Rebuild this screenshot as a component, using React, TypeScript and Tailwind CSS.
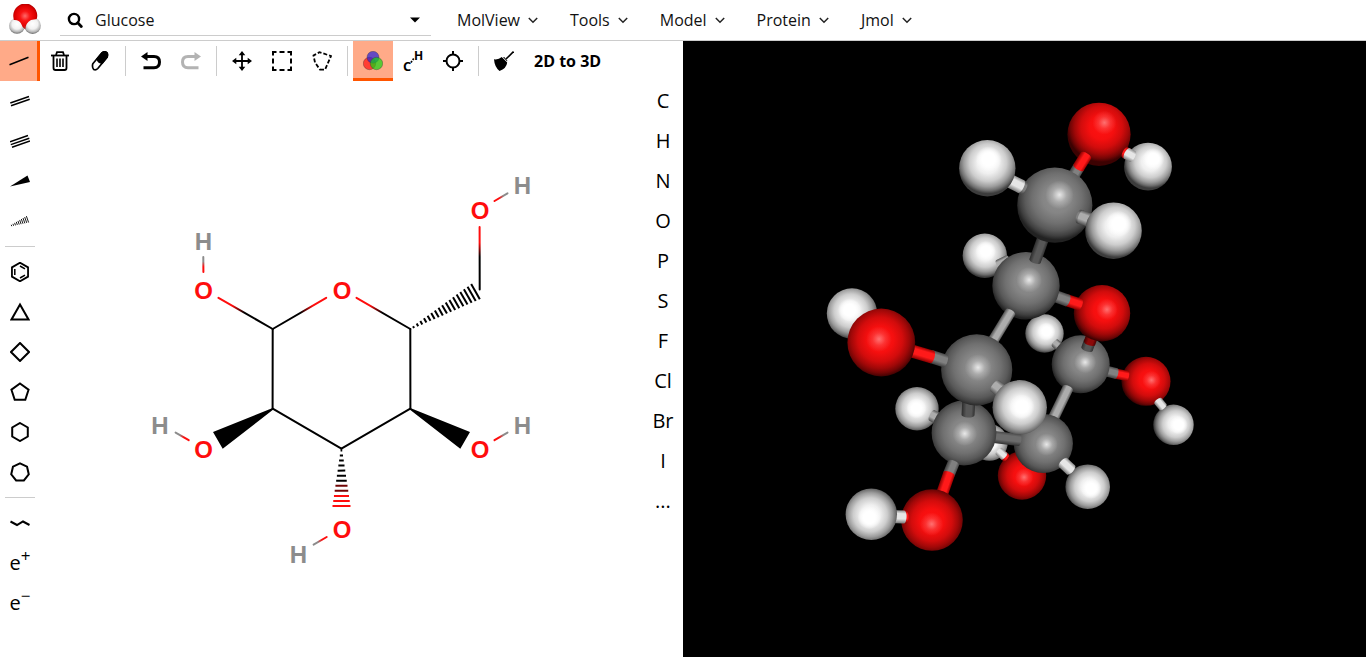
import React from "react";

type Point = [number, number];

/* ---------- Header ---------- */

function Logo() {
  return (
    <svg className="h-8 w-8" viewBox="0 0 32 32" role="img" aria-label="MolView">
      <defs>
        <radialGradient id="logo-o" gradientUnits="userSpaceOnUse" cx="16" cy="12" r="14">
          <stop offset="0" stopColor="#ff6a6a" />
          <stop offset="0.35" stopColor="#f81414" />
          <stop offset="0.75" stopColor="#dc0000" />
          <stop offset="1" stopColor="#8a0000" />
        </radialGradient>
        <radialGradient id="logo-h" cx="0.5" cy="0.4" r="0.62">
          <stop offset="0" stopColor="#ffffff" />
          <stop offset="0.5" stopColor="#f1f1f1" />
          <stop offset="0.8" stopColor="#b4b4b4" />
          <stop offset="1" stopColor="#5a5a5a" />
        </radialGradient>
      </defs>
      <circle cx="8" cy="21.800" r="7.900" fill="url(#logo-h)" />
      <path d="M4.500 14 A12 12 0 1 1 28 14 Q27 14 24 14 Q17 16 17 21 L16 25 Q13 23 12 19.500 Q10 15.500 4.800 16Z" fill="url(#logo-o)" />
      <circle cx="23.600" cy="21.600" r="8.300" fill="url(#logo-h)" />
      <path d="M14 18 L16.200 25.500 Q16.500 19 22 16 L28 15 L26 10 L14 12Z" fill="url(#logo-o)" />
    </svg>
  );
}

function Chevron() {
  return (
    <svg className="h-[10px] w-[10px]" viewBox="0 0 10 10" fill="none" stroke="#222" strokeWidth="1.5" aria-hidden="true">
      <path d="M0.800 3 L5 7.200 L9.200 3" />
    </svg>
  );
}

const menus = ["MolView", "Tools", "Model", "Protein", "Jmol"];

function Header() {
  return (
    <header className="flex h-[41px] items-start border-b border-[#ccc]">
      <a href="#home" className="flex h-10 w-[60px] shrink-0 items-center pl-[9px]">
        <Logo />
      </a>
      <form className="flex h-9 w-[371px] shrink items-center border-b border-[#ccc] pt-1" onSubmit={(e) => e.preventDefault()}>
        <button type="submit" aria-label="Search" className="flex w-[35px] shrink-0 items-center pl-[7px]">
          <svg className="h-4 w-4" viewBox="0 0 16 16" fill="none" stroke="#000" aria-hidden="true">
            <circle cx="7" cy="7" r="5.100" strokeWidth="2.400" />
            <path d="M10.700 10.700 L14.300 14.500" strokeWidth="2.800" strokeLinecap="round" />
          </svg>
        </button>
        <input aria-label="Search molecules" defaultValue="Glucose" className="h-8 min-w-0 flex-1 bg-transparent text-base text-[#111] outline-none" />
        <button type="button" aria-label="Search source" className="flex h-8 w-8 items-center justify-center">
          <svg className="h-[6px] w-[10px]" viewBox="0 0 10 6" aria-hidden="true">
            <path d="M0 0.500 H10 L5 5.500Z" />
          </svg>
        </button>
      </form>
      <nav className="ml-[10px] flex h-10">
        {menus.map((m) => (
          <button key={m} type="button" className="flex items-center gap-2 px-4 text-base text-[#111]">
            {m}
            <Chevron />
          </button>
        ))}
      </nav>
    </header>
  );
}

/* ---------- Toolbar icons (20 x 20 grid) ---------- */

function Icon({ children }: { children: React.ReactNode }) {
  return (
    <svg className="h-5 w-5" viewBox="0 0 20 20" fill="none" stroke="#000" strokeWidth="1.500" aria-hidden="true">
      {children}
    </svg>
  );
}

const trash = (
  <Icon>
    <path d="M1 4.500 H19" strokeWidth="1.800" />
    <path d="M6 4 L7 1.200 H13 L14 4" strokeWidth="1.800" />
    <path d="M3.500 5 V17 Q3.500 19 5.500 19 H14.500 Q16.500 19 16.500 17 V5" strokeWidth="1.800" />
    <path d="M7 7.500 V16 M10 7.500 V16 M13 7.500 V16" strokeWidth="1.600" />
  </Icon>
);

const eraser = (
  <Icon>
    <path d="M2.800 12.800 L12 1.800 Q13.500 0.500 15.500 0.900 L16.800 1.600 Q18 3 17.200 6 L7.800 17.500 Q5.800 19.600 3.800 18.600 Q1.800 16.500 2.800 12.800Z" strokeWidth="1.700" />
    <path d="M7 8 L12 1.800 Q13.500 0.500 15.500 0.900 L16.800 1.600 Q18 3 17.200 6 L12.200 12.300 Q8.500 12 7 8Z" fill="#000" />
  </Icon>
);

const undo = (
  <Icon>
    <path d="M5 5.500 H13 Q18.500 5.500 18.500 11 Q18.500 16.700 13 16.700 H2.500" strokeWidth="3" />
    <path d="M0 5.500 L6.500 1 V10Z" fill="#000" stroke="none" />
  </Icon>
);

const redo = (
  <Icon>
    <g stroke="#b3b3b3">
      <path d="M15 5.500 H7 Q1.500 5.500 1.500 11 Q1.500 16.700 7 16.700 H17.500" strokeWidth="3" />
      <path d="M20 5.500 L13.500 1 V10Z" fill="#b3b3b3" stroke="none" />
    </g>
  </Icon>
);

const move = (
  <Icon>
    <path d="M10 2 V18 M2 10 H18" strokeWidth="1.800" />
    <path d="M10 0 L13.300 4.300 H6.700Z M10 20 L13.300 15.700 H6.700Z M0 10 L4.300 6.700 V13.300Z M20 10 L15.700 6.700 V13.300Z" fill="#000" stroke="none" />
  </Icon>
);

const rectSelect = (
  <Icon>
    <path d="M1 4.500 V1 H4.500 M15.500 1 H19 V4.500 M19 15.500 V19 H15.500 M4.500 19 H1 V15.500" strokeWidth="2" />
    <path d="M7.500 1 H12.500 M7.500 19 H12.500 M1 7.500 V12.500 M19 7.500 V12.500" strokeWidth="2" />
  </Icon>
);

const lasso = (
  <Icon>
    <path d="M8 18.700 H13 L19 5 L7.500 1.200 L1.500 4.500 L3 11.500Z" strokeWidth="1.800" strokeDasharray="4 2" />
  </Icon>
);

const colorAtoms = (
  <Icon>
    <g stroke="#333" strokeWidth="0.500" strokeOpacity="0.700" fillOpacity="0.700">
      <circle cx="6.500" cy="12.500" r="6.200" fill="#ff1010" />
      <circle cx="10" cy="6.300" r="6" fill="#2420dc" />
      <circle cx="13.500" cy="12.500" r="6.200" fill="#12d412" />
    </g>
  </Icon>
);

const carbonHydrogen = (
  <svg className="h-9 w-9" viewBox="-8 -8 36 36" fill="none" stroke="#000" aria-hidden="true">
    <g fill="#000" stroke="none" fontFamily="Open Sans, sans-serif" fontWeight="700">
      <text x="0" y="20" fontSize="13">C</text>
      <text x="11" y="8.500" fontSize="12">H</text>
    </g>
    <path d="M8 11.500 L9 10 M9.700 9 L10.700 7.500" strokeWidth="1.600" />
  </svg>
);

const center = (
  <Icon>
    <circle cx="10" cy="10" r="6.500" strokeWidth="2" />
    <path d="M10 0 V4 M10 16 V20 M0 10 H4 M16 10 H20" strokeWidth="2" />
  </Icon>
);

const broom = (
  <Icon>
    <path d="M12 8 L19.500 0.600" strokeWidth="1.600" />
    <path d="M0 8.300 Q4.500 9 7.800 6 L13.200 11.500 Q12.500 17.500 5.500 20 Q0.500 16 0 8.300Z" fill="#000" stroke="none" />
    <path d="M8.800 6.300 L10.200 6 L13.300 9.500 L13 10.800Z" fill="#000" stroke="none" />
    <path d="M8 5.500 L13.800 11.500" stroke="#fff" strokeWidth="0.600" />
  </Icon>
);

function Divider() {
  return <hr className="mx-[5px] h-[30px] w-px border-0 bg-[#ccc]" />;
}

function ToolButton({ label, active, children }: { label: string; active?: boolean; children: React.ReactNode }) {
  return (
    <button
      type="button"
      aria-label={label}
      aria-pressed={active}
      className={
        active
          ? "flex h-10 w-10 shrink-0 items-center justify-center bg-[#ffaa88] shadow-[inset_0_-3px_0_#ff5500]"
          : "flex h-10 w-10 shrink-0 items-center justify-center"
      }
    >
      {children}
    </button>
  );
}

function TopTools() {
  return (
    <div role="toolbar" aria-label="Sketch tools" className="flex h-10 items-center">
      <ToolButton label="Clear all">{trash}</ToolButton>
      <ToolButton label="Erase">{eraser}</ToolButton>
      <Divider />
      <ToolButton label="Undo">{undo}</ToolButton>
      <ToolButton label="Redo">{redo}</ToolButton>
      <Divider />
      <ToolButton label="Drag">{move}</ToolButton>
      <ToolButton label="Rectangle selection">{rectSelect}</ToolButton>
      <ToolButton label="Lasso selection">{lasso}</ToolButton>
      <Divider />
      <ToolButton label="Color mode" active>{colorAtoms}</ToolButton>
      <ToolButton label="Skeletal display">{carbonHydrogen}</ToolButton>
      <ToolButton label="Center structure">{center}</ToolButton>
      <Divider />
      <ToolButton label="Clean structure">{broom}</ToolButton>
      <button type="button" className="h-10 px-[10px] text-base font-bold whitespace-nowrap">2D to 3D</button>
    </div>
  );
}

/* ---------- Left column ---------- */

function ring(n: number, r: number, cy: number, start = -90) {
  return Array.from({ length: n }, (_, i) => {
    const a = ((start + (i * 360) / n) * Math.PI) / 180;
    return `${(10 + r * Math.cos(a)).toFixed(2)},${(cy + r * Math.sin(a)).toFixed(2)}`;
  }).join(" ");
}

const hashLines = Array.from({ length: 10 }, (_, i) => {
  const t = i / 9;
  const x = 1.5 + 16 * t;
  const y = 14.5 - 6.2 * t;
  const h = 0.7 + 2.5 * t;
  return `M${x - h * 0.35} ${y - h} L${x + h * 0.35} ${y + h}`;
}).join(" ");

const bondTools: { label: string; icon: React.ReactNode }[] = [
  { label: "Double bond", icon: <path d="M0.300 12 L19 5.500 M1 14.800 L19.700 8.300" /> },
  { label: "Triple bond", icon: <path d="M0 10.800 L18 4.500 M0.800 13.600 L19.300 7.200 M2 16.200 L20 9.900" /> },
  { label: "Wedge bond", icon: <path d="M0 15.500 L17.500 4.500 L20 11Z" fill="#000" stroke="none" /> },
  { label: "Hash bond", icon: <path d={hashLines} strokeWidth="0.900" /> },
];

const ringTools: { label: string; icon: React.ReactNode }[] = [
  {
    label: "Benzene",
    icon: (
      <>
        <polygon points={ring(6, 9.3, 10)} strokeWidth="1.800" />
        <path d="M10 4 L15 6.900 M4.800 7 V13 M10 16 L15 13.100" strokeWidth="1.500" />
      </>
    ),
  },
  { label: "Cyclopropane", icon: <polygon points="10,2.500 18.500,17.500 1.500,17.500" strokeWidth="2" /> },
  { label: "Cyclobutane", icon: <polygon points={ring(4, 9, 10)} strokeWidth="2" /> },
  { label: "Cyclopentane", icon: <polygon points={ring(5, 9, 10.5)} strokeWidth="2" /> },
  { label: "Cyclohexane", icon: <polygon points={ring(6, 9, 10)} strokeWidth="2" /> },
  { label: "Cycloheptane", icon: <polygon points={ring(7, 9, 10.3)} strokeWidth="2" /> },
];

function LeftTools() {
  return (
    <div role="toolbar" aria-label="Bonds and rings" className="flex w-10 shrink-0 flex-col items-center">
      <button type="button" aria-label="Single bond" aria-pressed="true" className="flex h-10 w-10 items-center justify-center bg-[#ffaa88] pr-[3px] shadow-[inset_-3px_0_0_#ff5500]">
        <Icon><path d="M0.500 13.700 L19.500 6.300" /></Icon>
      </button>
      {bondTools.map((t) => (
        <ToolButton key={t.label} label={t.label}><Icon>{t.icon}</Icon></ToolButton>
      ))}
      <hr className="my-[5px] h-px w-[30px] border-0 bg-[#ccc]" />
      {ringTools.map((t) => (
        <ToolButton key={t.label} label={t.label}><Icon>{t.icon}</Icon></ToolButton>
      ))}
      <hr className="my-[5px] h-px w-[30px] border-0 bg-[#ccc]" />
      <ToolButton label="Carbon chain">
        <Icon><path d="M0.500 8.500 L7 12 L13 8.500 L19.500 12" strokeWidth="2" /></Icon>
      </ToolButton>
      <button type="button" aria-label="Positive charge" className="h-10 w-10 text-xl leading-10">
        e<sup className="text-[17px] leading-none">+</sup>
      </button>
      <button type="button" aria-label="Negative charge" className="h-10 w-10 text-xl leading-10">
        e<sup className="text-[17px] leading-none">−</sup>
      </button>
    </div>
  );
}

/* ---------- Structural formula ---------- */

const RED = "#ff0d0d";
const GRAY = "#8c8c8c";

const bonds2d: { a: Point; b: Point; from: string; to: string }[] = [
  { a: [218.5, 297.8], b: [272.7, 329], from: RED, to: "#000" },
  { a: [326.2, 297.8], b: [272.7, 329], from: RED, to: "#000" },
  { a: [356.5, 297.8], b: [410.3, 329], from: RED, to: "#000" },
  { a: [479.6, 227], b: [479.7, 289.5], from: RED, to: "#000" },
  { a: [272.7, 329], b: [272.6, 408.7], from: "#000", to: "#000" },
  { a: [410.3, 329], b: [410.4, 408.7], from: "#000", to: "#000" },
  { a: [272.7, 408.7], b: [341.4, 448.7], from: "#000", to: "#000" },
  { a: [341.4, 448.7], b: [410.3, 408.7], from: "#000", to: "#000" },
  { a: [203.4, 272], b: [203.3, 257], from: RED, to: GRAY },
  { a: [494.5, 201], b: [507.5, 193.3], from: RED, to: GRAY },
  { a: [494.5, 440.2], b: [507.5, 432.6], from: RED, to: GRAY },
  { a: [188.7, 440.2], b: [175.6, 432.6], from: RED, to: GRAY },
  { a: [326.7, 537], b: [313.6, 544.6], from: RED, to: GRAY },
];

const oxygens2d: Point[] = [[203.7, 290], [342, 290], [480, 210], [203.7, 449], [480, 449], [342, 529]];
const hydrogens2d: Point[] = [[203.3, 241], [522.3, 185], [160, 425], [522.3, 425], [298.3, 554]];

function hashBond(a: Point, b: Point, n: number, maxHalf: number, start: number) {
  const dx = b[0] - a[0];
  const dy = b[1] - a[1];
  const len = Math.hypot(dx, dy);
  return Array.from({ length: n }, (_, i) => {
    const t = start + ((1 - start) * i) / (n - 1);
    const h = 0.6 + (maxHalf - 0.6) * t;
    const x = a[0] + dx * t;
    const y = a[1] + dy * t;
    return { x1: x - (dy / len) * h, y1: y + (dx / len) * h, x2: x + (dy / len) * h, y2: y - (dx / len) * h };
  });
}

function Formula() {
  const ch2 = hashBond([410.3, 329], [475.5, 291.6], 17, 8.7, 0.05);
  const down = hashBond([341.4, 448.7], [341.5, 506], 12, 9, 0.03);
  return (
    <svg className="h-full w-full" viewBox="40 81 603 576" role="img" aria-label="Structural formula of glucose">
      <defs>
        {bonds2d.map((s, i) => (
          <linearGradient key={i} id={`b2-${i}`} gradientUnits="userSpaceOnUse" x1={s.a[0]} y1={s.a[1]} x2={s.b[0]} y2={s.b[1]}>
            <stop offset={s.to === GRAY ? 0.35 : 0.25} stopColor={s.from} />
            <stop offset={s.to === GRAY ? 0.7 : 0.48} stopColor={s.to} />
          </linearGradient>
        ))}
      </defs>
      <g strokeWidth="2" strokeLinecap="round">
        {bonds2d.map((s, i) => (
          <line key={i} x1={s.a[0]} y1={s.a[1]} x2={s.b[0]} y2={s.b[1]} stroke={s.from === s.to ? s.from : `url(#b2-${i})`} />
        ))}
      </g>
      <path d="M272.700 408 L213 432 L222.700 448.700 L273.300 409.500Z M410.300 408 L470 432 L460.300 448.700 L409.700 409.500Z" />
      {ch2.map((l, i) => (
        <line key={i} {...l} stroke="#000" strokeWidth="2" />
      ))}
      {down.map((l, i) => (
        <line key={i} {...l} stroke={i < 7 ? "#000" : i < 9 ? "#700404" : RED} strokeWidth="2" />
      ))}
      <g fontFamily="Liberation Sans, Arial, sans-serif" fontWeight="700" fontSize="24" textAnchor="middle">
        {oxygens2d.map(([x, y]) => (
          <text key={`${x}-${y}`} x={x} y={y + 8.5} fill={RED}>O</text>
        ))}
        {hydrogens2d.map(([x, y]) => (
          <text key={`${x}-${y}`} x={x} y={y + 8.5} fill={GRAY}>H</text>
        ))}
      </g>
    </svg>
  );
}

const elements = ["C", "H", "N", "O", "P", "S", "F", "Cl", "Br", "I", "..."];

function Elements() {
  return (
    <div role="toolbar" aria-label="Elements" className="flex w-10 shrink-0 flex-col">
      {elements.map((e) => (
        <button key={e} type="button" className="h-10 w-10 text-xl">{e}</button>
      ))}
    </div>
  );
}

/* ---------- Ball and stick model ---------- */

type Kind = "C" | "H" | "O";

const shades: Record<Kind, [number, string][]> = {
  C: [[0, "#909090"], [0.35, "#858585"], [0.6, "#707070"], [0.78, "#595959"], [0.9, "#404040"], [1, "#222222"]],
  O: [[0, "#ff1212"], [0.35, "#f60f0f"], [0.6, "#d20c0c"], [0.78, "#a00808"], [0.9, "#720505"], [1, "#3c0202"]],
  H: [[0, "#ffffff"], [0.35, "#f0f0f0"], [0.6, "#cdcdcd"], [0.78, "#9d9d9d"], [0.9, "#707070"], [1, "#3c3c3c"]],
};

const gloss: Record<Kind, [string, number, number]> = {
  C: ["#fff", 0.8, 0.38],
  O: ["#ff9a9a", 0.7, 0.38],
  H: ["#fff", 1, 0.46],
};

const stickColors = {
  white: ["#8a8a8a", "#e6e6e6", "#777777"],
  light: ["#555555", "#acacac", "#4c4c4c"],
  gray: ["#484848", "#808080", "#3c3c3c"],
  dim: ["#4a4a4a", "#6c6c6c", "#333333"],
  dark: ["#303030", "#575757", "#2c2c2c"],
  red: ["#990000", "#ff1a1a", "#880000"],
  maroon: ["#4c0000", "#8c0909", "#400000"],
} as const;

type Ball = { kind: Kind; x: number; y: number; r: number };
type Stick = { color: keyof typeof stickColors; a: Point; b: Point; w: number };

const ball = (kind: Kind, x: number, y: number, r: number): Ball => ({ kind, x, y, r });
const stick = (color: Stick["color"], a: Point, b: Point, w: number): Stick => ({ color, a, b, w });

/* Painted from the farthest to the nearest part. */
const scene: (Ball | Stick)[] = [
  ball("H", 989.5, 442.5, 18.3),
  ball("O", 1022, 475.5, 24.2),
  stick("red", [1003, 455], [1006, 457.5], 9),
  stick("white", [999, 451.5], [1004, 456], 9),
  ball("H", 1044.5, 333.5, 19.2),
  stick("light", [1055, 343], [1062, 349], 9),
  ball("H", 1173.5, 424.8, 20.2),
  ball("O", 1146, 381.3, 24.5),
  stick("white", [1158, 401], [1163, 407], 9),
  stick("red", [1115, 373.5], [1127, 376], 10),
  stick("gray", [1104, 370.5], [1116, 373.5], 11),
  ball("C", 1080.7, 364.3, 29),
  stick("light", [1068, 388], [1052, 421], 11),
  stick("dark", [1089.5, 342], [1087, 349], 12),
  stick("maroon", [1092, 336], [1089.5, 343], 12),
  ball("C", 1043.3, 443.5, 29.6),
  ball("H", 1087.7, 486.7, 22.3),
  stick("white", [1063, 462.5], [1071, 470], 12),
  stick("dim", [990, 436.5], [1019, 440], 12),
  ball("O", 1102, 313.3, 28.2),
  stick("red", [1066, 300], [1080, 304.5], 12),
  stick("gray", [1052, 295], [1067.5, 300.5], 12),
  ball("H", 984.8, 255.8, 22.2),
  stick("light", [998.5, 264.5], [1008, 260], 10),
  ball("C", 1026, 285.7, 33.7),
  stick("light", [1010.5, 312], [991, 344], 11),
  stick("dark", [1045, 233], [1035, 261], 12),
  ball("H", 917, 408.7, 21.7),
  stick("light", [932, 415.5], [943, 421], 12),
  ball("C", 964, 433, 32.4),
  stick("gray", [953.5, 463], [949, 474], 12),
  stick("red", [949, 474], [942, 494], 12),
  stick("dark", [969, 397], [968, 415], 13),
  ball("O", 932, 520, 30.8),
  stick("red", [902, 517], [906, 517], 13),
  stick("white", [890, 516.5], [904, 517], 13),
  ball("H", 871.3, 514.3, 25.7),
  ball("C", 976.7, 369.8, 35.6),
  stick("gray", [931, 356.5], [945, 361], 13),
  stick("red", [905, 349], [932, 357], 13),
  ball("H", 852, 313.5, 25.2),
  ball("O", 881.3, 342.5, 33.9),
  stick("light", [995, 386], [1008, 396], 14),
  ball("H", 1019.7, 407.3, 27.2),
  ball("H", 1148, 166.7, 23.9),
  ball("O", 1099, 134.3, 31.6),
  stick("red", [1125, 152.5], [1128, 154], 12),
  stick("white", [1127, 153.5], [1132.5, 156.5], 12),
  stick("gray", [1078.5, 167.5], [1071, 180], 12),
  stick("red", [1086, 155.5], [1078.5, 167.5], 12),
  ball("C", 1054.8, 205.2, 37.6),
  stick("gray", [1020, 186], [1023.5, 188], 14),
  stick("white", [1008, 180], [1021, 186.5], 14),
  ball("H", 987.3, 168.3, 28.2),
  stick("gray", [1079, 216.5], [1082, 217.5], 14),
  stick("light", [1081, 217], [1092, 221], 14),
  ball("H", 1113.5, 230.7, 28.3),
];

/* The light moves relative to each ball with its distance from the view's centre. */
function highlight(b: Ball): Point {
  return [b.x + b.r * (0.09 + 0.0011 * (b.x - 1024)), b.y + b.r * (-0.09 + 0.0013 * (b.y - 349))];
}

function BallShape({ b, id }: { b: Ball; id: string }) {
  const [hx, hy] = highlight(b);
  const [glow, opacity, size] = gloss[b.kind];
  return (
    <g>
      <radialGradient id={`${id}d`} gradientUnits="userSpaceOnUse" cx={b.x + (hx - b.x) * 0.5} cy={b.y + (hy - b.y) * 0.5 - b.r * 0.04} r={b.r * 1.1}>
        {shades[b.kind].map(([o, c]) => (
          <stop key={o} offset={o} stopColor={c} />
        ))}
      </radialGradient>
      <radialGradient id={`${id}s`} gradientUnits="userSpaceOnUse" cx={hx} cy={hy} r={b.r * size}>
        <stop offset="0" stopColor={glow} stopOpacity={opacity} />
        <stop offset="0.5" stopColor={glow} stopOpacity={b.kind === "H" ? 1 : opacity * 0.35} />
        <stop offset="1" stopColor={glow} stopOpacity="0" />
      </radialGradient>
      <circle cx={b.x} cy={b.y} r={b.r} fill={`url(#${id}d)`} />
      <circle cx={hx} cy={hy} r={b.r * size} fill={`url(#${id}s)`} />
    </g>
  );
}

function StickShape({ s, id }: { s: Stick; id: string }) {
  const dx = s.b[0] - s.a[0];
  const dy = s.b[1] - s.a[1];
  const len = Math.hypot(dx, dy);
  const h = s.w / 2;
  const nx = (dy / len) * h;
  const ny = (-dx / len) * h;
  const angle = (Math.atan2(dy, dx) * 180) / Math.PI;
  const cap = `A${h * 0.4} ${h} ${angle} 0`;
  const d = `M${s.a[0] + nx} ${s.a[1] + ny} L${s.b[0] + nx} ${s.b[1] + ny} ${cap} 1 ${s.b[0] - nx} ${s.b[1] - ny} L${s.a[0] - nx} ${s.a[1] - ny} ${cap} 1 ${s.a[0] + nx} ${s.a[1] + ny}Z`;
  const [c1, c2, c3] = stickColors[s.color];
  return (
    <g>
      <linearGradient id={id} gradientUnits="userSpaceOnUse" x1={s.a[0] + nx} y1={s.a[1] + ny} x2={s.a[0] - nx} y2={s.a[1] - ny}>
        <stop offset="0" stopColor={c1} />
        <stop offset="0.25" stopColor={c2} />
        <stop offset="0.65" stopColor={c2} />
        <stop offset="1" stopColor={c3} />
      </linearGradient>
      <path d={d} fill={`url(#${id})`} />
    </g>
  );
}

function Model() {
  return (
    <svg className="h-full w-full" viewBox="683 41 683 616" role="img" aria-label="3D model of glucose">
      {scene.map((p, i) =>
        "kind" in p ? <BallShape key={i} b={p} id={`ball${i}`} /> : <StickShape key={i} s={p} id={`stick${i}`} />,
      )}
    </svg>
  );
}

export default function App() {
  return (
    <div className="flex h-screen flex-col overflow-hidden bg-white font-['Open_Sans',sans-serif] text-black">
      <Header />
      <main className="flex min-h-0 flex-1">
        <section aria-label="Sketcher" className="flex min-w-0 flex-1 basis-0">
          <LeftTools />
          <div className="flex min-w-0 flex-1 flex-col">
            <TopTools />
            <div className="flex min-h-0 flex-1">
              <div className="min-w-0 flex-1">
                <Formula />
              </div>
              <Elements />
            </div>
          </div>
        </section>
        <section aria-label="Model" className="min-w-0 flex-1 basis-0 bg-black">
          <Model />
        </section>
      </main>
    </div>
  );
}
